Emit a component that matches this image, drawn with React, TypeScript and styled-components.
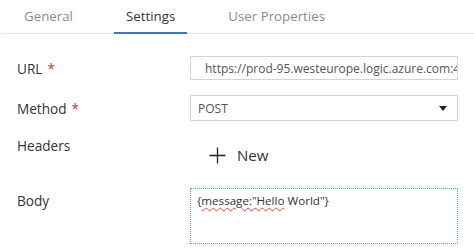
import React from 'react';
import styled, { createGlobalStyle, css } from 'styled-components';

const GlobalStyle = createGlobalStyle`
  html, body {
    margin: 0;
    padding: 0;
    background: #ffffff;
  }
  body {
    font-family: "Segoe UI", "Open Sans", "Noto Sans", sans-serif;
    color: #333333;
  }
`;

const Page = styled.div`
  width: 474px;
  height: 249px;
  overflow: hidden;
  background: #ffffff;
`;

const TabBar = styled.div`
  display: flex;
  height: 33px;
  padding-left: 11px;
  margin: 0 0 0 2px;
  border-bottom: 1px solid #e6e6e6;
`;

const Tab = styled.div<{ active?: boolean }>`
  position: relative;
  display: flex;
  align-items: center;
  justify-content: center;
  padding: 0 11px 1px;
  margin-right: 30px;
  font-size: 13.3px;
  color: #8a8a8a;
  height: 100%;
  box-sizing: border-box;

  ${(props) => props.active && css`
    color: #333333;
    padding: 0 12px 1px;
    &:after {
      content: '';
      position: absolute;
      left: 0;
      right: 0;
      bottom: -1px;
      height: 2px;
      background: #3f74c2;
    }
  `}
`;

const Form = styled.div`
  display: flex;
  flex-direction: column;
  padding: 22px 0 0 17px;
`;

const Row = styled.div<{ top?: boolean; gap?: number }>`
  display: flex;
  align-items: ${(props) => (props.top ? 'flex-start' : 'center')};
  margin-bottom: ${(props) => props.gap ?? 15}px;
`;

const Label = styled.div<{ offset?: number }>`
  width: 173px;
  flex-shrink: 0;
  font-size: 13.6px;
  color: #333333;
  margin-top: ${(props) => props.offset || 0}px;
`;

const Required = styled.span`
  color: #d13438;
  margin-left: 5px;
`;

const Input = styled.div`
  width: 268px;
  height: 24px;
  box-sizing: border-box;
  border: 1px solid #d4d4d4;
  padding: 0 8px 0 14px;
  display: flex;
  align-items: center;
  font-size: 12px;
  color: #555555;
  white-space: nowrap;
  overflow: hidden;
`;

const Select = styled(Input)`
  height: 26px;
  padding: 0 10px 0 7px;
  justify-content: space-between;
`;

const Caret = styled.span`
  width: 0;
  height: 0;
  border-left: 4px solid transparent;
  border-right: 4px solid transparent;
  border-top: 5px solid #222222;
`;

const NewButton = styled.div`
  display: flex;
  align-items: center;
  gap: 11px;
  margin: 9px 0 0 19px;
  font-size: 15px;
  color: #333333;
`;

const TextArea = styled.div`
  width: 268px;
  height: 56px;
  box-sizing: border-box;
  border: 1px dotted #4fb6d3;
  padding: 4px 6px;
  font-size: 11.6px;
  color: #333333;
`;

const Misspelled = styled.span`
  text-decoration: underline wavy #e0453a;
  text-decoration-thickness: 1px;
  text-underline-offset: 2px;
`;

export default function App() {
  return (
    <Page>
      <GlobalStyle />
      <TabBar>
        <Tab>General</Tab>
        <Tab active>Settings</Tab>
        <Tab>User Properties</Tab>
      </TabBar>
      <Form>
        <Row>
          <Label>URL<Required>*</Required></Label>
          <Input>https://prod-95.westeurope.logic.azure.com:443/workflows/</Input>
        </Row>
        <Row>
          <Label>Method<Required>*</Required></Label>
          <Select>
            POST
            <Caret />
          </Select>
        </Row>
        <Row top gap={23}>
          <Label>Headers</Label>
          <NewButton>
            <svg width="17" height="17" viewBox="0 0 17 17">
              <path d="M8.5 0.5 V16.5 M0.5 8.5 H16.5" stroke="#222" strokeWidth="1.3" fill="none" />
            </svg>
            New
          </NewButton>
        </Row>
        <Row top>
          <Label offset={3}>Body</Label>
          <TextArea>
            {'{'}<Misspelled>message:"Hello</Misspelled> World"{'}'}
          </TextArea>
        </Row>
      </Form>
    </Page>
  );
}
